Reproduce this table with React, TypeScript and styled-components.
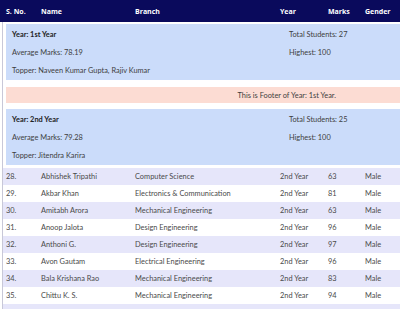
import React from "react";
import styled, { createGlobalStyle } from "styled-components";

const Global = createGlobalStyle`
  html, body { margin: 0; padding: 0; background: #ffffff; }
  body { font-family: "Open Sans", "Noto Sans", sans-serif; overflow: hidden; }
`;

const COLS = "35px 94px 145px 48px 37px 1fr";
const TEXT_FONT = `"Lato", "Open Sans", sans-serif`;

const Page = styled.div`
  width: 400px;
  height: 309px;
  overflow: hidden;
  display: flex;
  flex-direction: column;
`;

const HeaderRow = styled.div`
  display: grid;
  grid-template-columns: ${COLS};
  align-items: center;
  height: 22px;
  padding-left: 6px;
  background: #0a0a5c;
  color: #ffffff;
  font-size: 7px;
  font-weight: 700;
  flex-shrink: 0;
`;

const Body = styled.div`
  border-left: 1px solid #c8c8d8;
  margin-left: 2px;
  display: flex;
  flex-direction: column;
  padding-top: 2px;
`;

const GroupHeader = styled.div`
  margin-left: 3px;
  height: 56px;
  background: #cbdcfa;
  display: grid;
  grid-template-columns: 277px 1fr;
  grid-template-rows: repeat(3, 18px);
  align-content: start;
  padding-top: 1px;
  padding-left: 6px;
  box-sizing: border-box;
  font-family: ${TEXT_FONT};
  font-size: 7.4px;
`;

const Cell = styled.div<{ $bold?: boolean }>`
  display: flex;
  align-items: center;
  font-weight: ${(p) => (p.$bold ? 700 : 400)};
  color: ${(p) => (p.$bold ? "#222222" : "#3e3e3e")};
  white-space: nowrap;
`;

const Gap = styled.div<{ $h: number }>`
  height: ${(p) => p.$h}px;
  flex-shrink: 0;
`;

const Footer = styled.div`
  margin-left: 3px;
  height: 16px;
  background: #fcdcd3;
  display: flex;
  align-items: center;
  justify-content: flex-end;
  padding-right: 64px;
  color: #3e3e3e;
  font-family: ${TEXT_FONT};
  font-size: 7.4px;
  flex-shrink: 0;
`;

const Row = styled.div<{ $alt: boolean }>`
  display: grid;
  grid-template-columns: ${COLS};
  align-items: center;
  height: 17px;
  padding-left: 3px;
  background: ${(p) => (p.$alt ? "#e6e6fa" : "#ffffff")};
  color: #4a4a4a;
  font-family: ${TEXT_FONT};
  font-size: 7.4px;
  flex-shrink: 0;
`;

const rows = [
  ["28.", "Abhishek Tripathi", "Computer Science", "2nd Year", "63", "Male"],
  ["29.", "Akbar Khan", "Electronics & Communication", "2nd Year", "81", "Male"],
  ["30.", "Amitabh Arora", "Mechanical Engineering", "2nd Year", "63", "Male"],
  ["31.", "Anoop Jalota", "Design Engineering", "2nd Year", "96", "Male"],
  ["32.", "Anthoni G.", "Design Engineering", "2nd Year", "97", "Male"],
  ["33.", "Avon Gautam", "Electrical Engineering", "2nd Year", "96", "Male"],
  ["34.", "Bala Krishana Rao", "Mechanical Engineering", "2nd Year", "83", "Male"],
  ["35.", "Chittu K. S.", "Mechanical Engineering", "2nd Year", "94", "Male"],
  ["", "", "", "", "", ""],
];

function Group({ year, avg, topper, total }: { year: string; avg: string; topper: string; total: string }) {
  return (
    <GroupHeader>
      <Cell $bold>Year: {year}</Cell>
      <Cell>Total Students: {total}</Cell>
      <Cell>Average Marks: {avg}</Cell>
      <Cell>Highest: 100</Cell>
      <Cell>Topper: {topper}</Cell>
      <Cell />
    </GroupHeader>
  );
}

export default function App() {
  return (
    <Page>
      <Global />
      <HeaderRow>
        <span>S. No.</span>
        <span>Name</span>
        <span>Branch</span>
        <span>Year</span>
        <span>Marks</span>
        <span>Gender</span>
      </HeaderRow>
      <Body>
        <Group year="1st Year" avg="78.19" topper="Naveen Kumar Gupta, Rajiv Kumar" total="27" />
        <Gap $h={7} />
        <Footer>This is Footer of Year: 1st Year.</Footer>
        <Gap $h={6} />
        <Group year="2nd Year" avg="79.28" topper="Jitendra Karira" total="25" />
        <Gap $h={3} />
        {rows.map((r, i) => (
          <Row key={i} $alt={i % 2 === 0}>
            {r.map((c, j) => (
              <span key={j}>{c}</span>
            ))}
          </Row>
        ))}
      </Body>
    </Page>
  );
}
